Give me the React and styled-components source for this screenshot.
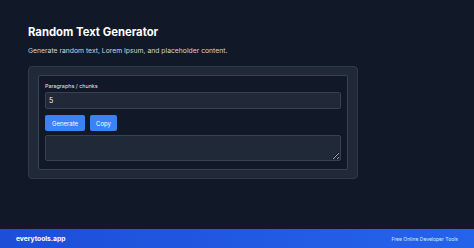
import React, { useState } from "react";
import styled, { createGlobalStyle } from "styled-components";

const Global = createGlobalStyle`
  html, body {
    margin: 0;
    padding: 0;
    background: #111827;
  }
  body {
    font-family: Inter, "Noto Sans", "Liberation Sans", sans-serif;
    color: #f3f4f6;
  }
  * { box-sizing: border-box; }
`;

const Page = styled.div`
  height: 248px;
  display: flex;
  flex-direction: column;
  overflow: hidden;
`;

const Main = styled.main`
  flex: 1;
  padding: 25px 28px 0 28px;
`;

const Title = styled.h1`
  margin: 0;
  font-size: 11.3px;
  line-height: 14px;
  font-weight: 700;
  color: #ffffff;
`;

const Subtitle = styled.p`
  margin: 7px 0 0 0;
  font-size: 6.8px;
  line-height: 10px;
  color: #d1d5db;
`;

const Card = styled.section`
  margin-top: 10px;
  width: 330px;
  padding: 8px 9px;
  background: #1f2937;
  border: 1px solid #2f3a4a;
  border-radius: 4px;
`;

const Panel = styled.div`
  background: #111827;
  border: 1px solid #374151;
  border-radius: 2px;
  padding: 6px 6px 8px 6px;
  display: flex;
  flex-direction: column;
`;

const Label = styled.label`
  font-size: 5.4px;
  line-height: 8px;
  color: #e5e7eb;
  margin-bottom: 2px;
`;

const Input = styled.input`
  height: 17px;
  width: 100%;
  background: #1f2937;
  border: 1px solid #374151;
  border-radius: 2px;
  color: #f3f4f6;
  font-family: inherit;
  font-size: 7px;
  padding: 0 3px;
  outline: none;
`;

const Row = styled.div`
  display: flex;
  gap: 5px;
  margin-top: 6px;
`;

const Button = styled.button`
  height: 16px;
  padding: 0 ${(p) => p.$px}px;
  background: #3b82f6;
  border: none;
  border-radius: 2px;
  color: #ffffff;
  font-family: inherit;
  font-size: 6px;
  cursor: pointer;
`;

const Output = styled.textarea`
  display: block;
  margin-top: 4px;
  height: 26px;
  width: 100%;
  background: #1f2937;
  border: 1px solid #374151;
  border-radius: 2px;
  color: #f3f4f6;
  font-family: inherit;
  font-size: 7px;
  resize: vertical;
  outline: none;
`;

const Footer = styled.footer`
  height: 19px;
  flex-shrink: 0;
  display: flex;
  align-items: center;
  justify-content: space-between;
  padding: 0 16px;
  background: linear-gradient(90deg, #1d4ed8, #2563eb);
`;

const Brand = styled.span`
  font-size: 6.7px;
  font-weight: 700;
  color: #ffffff;
`;

const Tagline = styled.span`
  font-size: 5px;
  color: #dbeafe;
`;

export default function App() {
  const [count, setCount] = useState("5");
  const [text, setText] = useState("");

  return (
    <Page>
      <Global />
      <Main>
        <Title>Random Text Generator</Title>
        <Subtitle>Generate random text, Lorem Ipsum, and placeholder content.</Subtitle>
        <Card>
          <Panel>
            <Label>Paragraphs / chunks</Label>
            <Input value={count} onChange={(e) => setCount(e.target.value)} />
            <Row>
              <Button $px={7}>Generate</Button>
              <Button $px={6}>Copy</Button>
            </Row>
            <Output value={text} onChange={(e) => setText(e.target.value)} />
          </Panel>
        </Card>
      </Main>
      <Footer>
        <Brand>everytools.app</Brand>
        <Tagline>Free Online Developer Tools</Tagline>
      </Footer>
    </Page>
  );
}
